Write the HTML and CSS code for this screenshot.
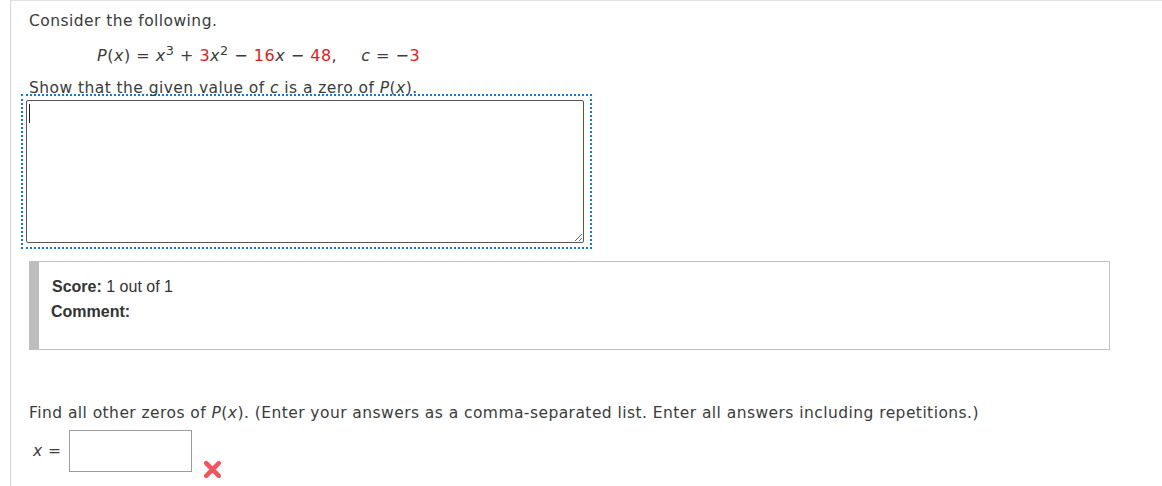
FILE: index.html
```html
<!DOCTYPE html>
<html>
<head>
<meta charset="utf-8">
<link rel="stylesheet" href="styles.css">
</head>
<body>
<div class="page">
  <p class="intro">Consider the following.</p>
  <p class="formula"><i>P</i>(<i>x</i>) = <i>x</i><sup>3</sup> + <span class="red">3</span><i>x</i><sup>2</sup> &minus; <span class="red">16</span><i>x</i> &minus; <span class="red">48</span>,<span class="gap"></span><i>c</i> = &minus;<span class="red">3</span></p>
  <p class="show">Show that the given value of <i>c</i> is a zero of <i>P</i>(<i>x</i>).</p>
  <div class="answer">
    <div class="ta-wrap">
      <textarea class="ta"></textarea>
      <span class="caret"></span>
    </div>
  </div>
  <div class="score">
    <div class="score-line"><b>Score:</b> 1 out of 1</div>
    <div class="comment"><b>Comment:</b></div>
  </div>
  <p class="find">Find all other zeros of <i>P</i>(<i>x</i>). (Enter your answers as a comma-separated list. Enter all answers including repetitions.)</p>
  <div class="row">
    <span class="xeq"><i>x</i> = </span>
    <span class="input"></span>
    <svg class="wrong" width="19" height="19" viewBox="0 0 18 18"><path d="M3 3 L15 15 M15 3 L3 15" stroke="#f0545c" stroke-width="4.2" stroke-linecap="round"/></svg>
  </div>
</div>
</body>
</html>
```
FILE: styles.css
```css
html, body { margin: 0; padding: 0; background: #fff; }
body { font-family: "DejaVu Sans", Verdana, sans-serif; font-size: 15.5px; letter-spacing: 0.44px; color: #3b3b3b; }
.page {
  margin-left: 10px;
  border-left: 1px solid #d6d6d6;
  border-top: 1px solid #e2e2e2;
  padding: 10px 0 0 18px;
  height: 475px;
}
p { margin: 0; }
.intro { line-height: 20px; }
.formula { margin-top: 14px; margin-left: 68px; line-height: 22px; font-size: 16px; letter-spacing: 0.5px; }
.formula sup { font-size: 80%; line-height: 0; position: relative; top: 0px; }
.red { color: #e31b1b; }
.gap { display: inline-block; width: 24px; }
.show { margin-top: 12px; line-height: 18px; height: 15px; }
.answer {
  margin-left: -8px;
  width: 560px;
  border: 2px dotted #1479d6;
  padding: 4px 4px 4px 3px;
}
.ta-wrap { position: relative; height: 143px; }
.ta {
  display: block;
  box-sizing: border-box;
  width: 558px;
  height: 143px;
  margin: 0;
  border: 1px solid #555;
  border-radius: 2px;
  resize: both;
  background: #fff;
}
.caret { position: absolute; left: 3px; top: 4px; width: 1px; height: 19px; background: #222; }
.score {
  margin-top: 12px;
  width: 1070px;
  height: 87px;
  border: 1px solid #c2c2c2;
  border-left: 10px solid #bdbdbd;
  box-sizing: content-box;
  font-family: "Liberation Sans", Arial, sans-serif;
  font-size: 16px;
  letter-spacing: 0;
  color: #333;
}
.score-line { margin: 15px 0 0 13px; line-height: 19px; }
.comment { margin: 6px 0 0 12px; line-height: 19px; }
.find { margin-top: 53px; line-height: 20px; }
.row { display: flex; align-items: flex-start; margin-top: 7px; }
.xeq { margin: 12px 0 0 4px; width: 36px; }
.input { width: 121px; height: 40px; border: 1px solid #9c9c9c; display: block; }
.wrong { margin: 30px 0 0 11px; }
```
